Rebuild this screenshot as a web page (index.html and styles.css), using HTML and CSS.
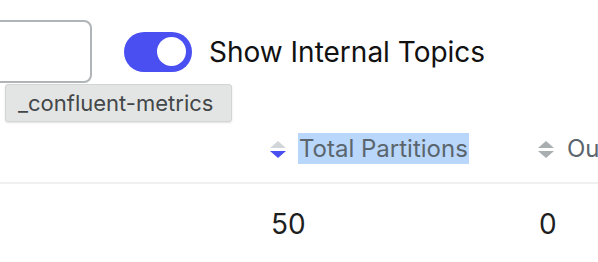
FILE: index.html
```html
<!DOCTYPE html>
<html>
<head>
<meta charset="utf-8">
<link rel="stylesheet" href="styles.css">
</head>
<body>
<div class="page">
  <div class="topbar">
    <div class="search"></div>
    <div class="toggle"><div class="knob"></div></div>
    <div class="toggle-label">Show Internal Topics</div>
  </div>
  <div class="tooltip">_confluent-metrics</div>
  <div class="table">
    <div class="thead">
      <div class="cell"></div>
      <div class="cell th">
        <svg class="sort" width="16" height="18" viewBox="0 0 16 18"><polygon points="8,0 16,7 0,7" fill="#d3d6d8"/><polygon points="0,10 16,10 8,17" fill="#4a4ff0"/></svg>
        <span class="label selected">Total Partitions</span>
      </div>
      <div class="cell th">
        <svg class="sort" width="16" height="18" viewBox="0 0 16 18"><polygon points="8,0 16,7 0,7" fill="#a9aeb1"/><polygon points="0,10 16,10 8,17" fill="#a9aeb1"/></svg>
        <span class="label">Out of sync replicas</span>
      </div>
    </div>
    <div class="trow">
      <div class="cell"></div>
      <div class="cell td">50</div>
      <div class="cell td">0</div>
    </div>
  </div>
</div>
</body>
</html>
```

FILE: styles.css
```css
html, body {
  margin: 0;
  padding: 0;
  background: #ffffff;
  overflow: hidden;
}
.page {
  position: relative;
  width: 598px;
  height: 262px;
  overflow: hidden;
  font-family: Inter, "Liberation Sans", sans-serif;
}
.topbar {
  display: flex;
  align-items: center;
  padding-top: 20px;
}
.search {
  flex: none;
  width: 200px;
  height: 63px;
  box-sizing: border-box;
  margin-left: -108px;
  border: 2px solid #afb5b9;
  border-radius: 8px;
  background: #fff;
}
.toggle {
  flex: none;
  width: 68px;
  height: 40px;
  margin-left: 32px;
  border-radius: 20px;
  background: #4a4ff2;
  display: flex;
  align-items: center;
  justify-content: flex-end;
  padding-right: 6px;
  box-sizing: border-box;
}
.knob {
  width: 29px;
  height: 29px;
  border-radius: 50%;
  background: #fff;
}
.toggle-label {
  margin-left: 17px;
  font-size: 28px;
  color: #111;
  white-space: nowrap;
}
.tooltip {
  position: absolute;
  left: 5px;
  top: 84px;
  width: 227px;
  height: 38px;
  box-sizing: border-box;
  padding-left: 12px;
  background: #e3e5e4;
  border: 1px solid #d3d5d4;
  border-radius: 3px;
  box-shadow: 0 1px 2px rgba(0,0,0,0.12);
  font-size: 22px;
  line-height: 36px;
  color: #434749;
  white-space: nowrap;
}
.table {
  width: 900px;
}
.thead, .trow {
  display: grid;
  grid-template-columns: 270px 268px 362px;
}
.thead {
  margin-top: 50px;
  padding-bottom: 18px;
  border-bottom: 2px solid #f0f0f0;
}
.th {
  display: flex;
  align-items: center;
  height: 31px;
  white-space: nowrap;
}
.sort {
  flex: none;
  display: block;
  margin-top: 2px;
}
.label {
  margin-left: 12px;
  padding: 0 1px;
  font-size: 24px;
  line-height: 31px;
  color: #5b656d;
}
.label.selected {
  background: #b9d7fb;
}
.trow {
  padding-top: 23px;
}
.td {
  font-size: 28px;
  line-height: 34px;
  color: #1f1f1f;
  padding-left: 1px;
}
```
